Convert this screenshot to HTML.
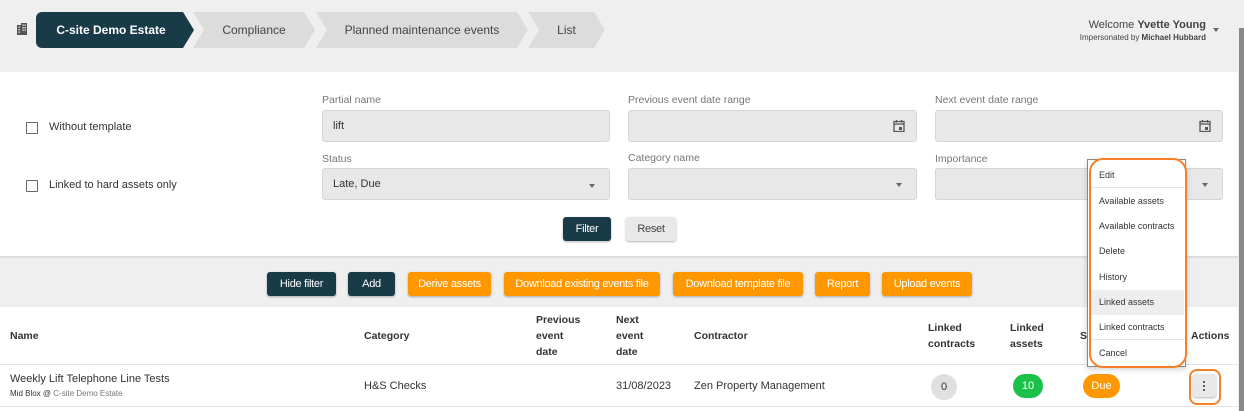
<!DOCTYPE html>
<html><head><meta charset="utf-8"><style>
*{box-sizing:border-box;margin:0;padding:0}
body{width:1244px;height:411px;overflow:hidden;background:#efefef;font-family:"Liberation Sans",sans-serif;color:#333;position:relative;font-size:11px}
.abs{position:absolute}
.crumb{position:absolute;top:12px;height:36px;display:flex;align-items:center;justify-content:center;font-size:12px;color:#444;background:#dcdcdc;clip-path:polygon(0 0,calc(100% - 11px) 0,100% 50%,calc(100% - 11px) 100%,0 100%,11px 50%)}
.panel{position:absolute;left:0;top:72px;width:1238px;height:186px;background:#fff;border-bottom:2px solid #ddd}
.lbl{position:absolute;font-size:10.5px;color:#777}
.inp{position:absolute;height:32px;background:#e8e8e8;border:1px solid #d6d6d6;border-radius:3px;font-size:11px;color:#333;padding-left:10px;line-height:30px}
.cb{position:absolute;width:12px;height:12px;border:1px solid #666;border-radius:1px}
.btn{position:absolute;height:24px;border-radius:3px;color:#fff;font-size:11px;display:flex;align-items:center;justify-content:center;box-shadow:0 1px 2px rgba(0,0,0,.3);letter-spacing:-.3px}
.dk{background:#193a47}.or{background:#ff9800}
.th{position:absolute;font-size:10.5px;font-weight:bold;color:#333;line-height:16px}
.td{position:absolute;font-size:11px;color:#333}
.caret{position:absolute;width:0;height:0;border-left:3.5px solid transparent;border-right:3.5px solid transparent;border-top:4px solid #666}
.mi{position:absolute;left:1099px;font-size:9px;color:#333}
</style></head><body>
<svg class="abs" style="left:16px;top:22px" width="12" height="13" viewBox="0 0 12 13"><path d="M1 13V3h4V1h6v12H1z" fill="#555"/><g fill="#efefef"><rect x="2.5" y="4.5" width="1.3" height="1.3"/><rect x="2.5" y="7" width="1.3" height="1.3"/><rect x="2.5" y="9.5" width="1.3" height="1.3"/><rect x="6.5" y="2.5" width="1.3" height="1.3"/><rect x="8.5" y="2.5" width="1.3" height="1.3"/><rect x="6.5" y="5" width="1.3" height="1.3"/><rect x="8.5" y="5" width="1.3" height="1.3"/><rect x="6.5" y="7.5" width="1.3" height="1.3"/><rect x="8.5" y="7.5" width="1.3" height="1.3"/></g></svg>
<div class="crumb" style="left:36px;width:158px;background:#193a47;color:#fff;font-weight:bold;border-radius:6px 0 0 6px;clip-path:polygon(0 0,calc(100% - 11px) 0,100% 50%,calc(100% - 11px) 100%,0 100%);padding-right:8px">C-site Demo Estate</div>
<div class="crumb" style="left:193px;width:122px">Compliance</div>
<div class="crumb" style="left:316px;width:212px">Planned maintenance events</div>
<div class="crumb" style="left:528px;width:77px">List</div>
<div class="abs" style="right:38px;top:19px;font-size:11px;color:#444;text-align:right;line-height:12px">Welcome <b>Yvette Young</b><br><span style="font-size:8px">Impersonated by <b>Michael Hubbard</b></span></div>
<div class="caret" style="left:1213px;top:28px"></div>

<div class="panel">
<div class="cb" style="left:26px;top:50px"></div><div class="td" style="left:49px;top:49px">Without template</div>
<div class="cb" style="left:26px;top:108px"></div><div class="td" style="left:49px;top:107px">Linked to hard assets only</div>
<div class="lbl" style="left:322px;top:22px">Partial name</div>
<div class="inp" style="left:322px;top:38px;width:288px">lift</div>
<div class="lbl" style="left:628px;top:22px">Previous event date range</div>
<div class="inp" style="left:628px;top:38px;width:289px"></div>
<svg class="abs" style="left:893px;top:47px" width="12" height="13" viewBox="0 0 12 13"><path d="M1 2.5h10v10H1zM1 5h10M3.5 1v2.5M8.5 1v2.5" fill="none" stroke="#555" stroke-width="1.3"/><rect x="6" y="8" width="3" height="3" fill="#555"/></svg>
<div class="lbl" style="left:935px;top:22px">Next event date range</div>
<div class="inp" style="left:935px;top:38px;width:288px"></div>
<svg class="abs" style="left:1199px;top:47px" width="12" height="13" viewBox="0 0 12 13"><path d="M1 2.5h10v10H1zM1 5h10M3.5 1v2.5M8.5 1v2.5" fill="none" stroke="#555" stroke-width="1.3"/><rect x="6" y="8" width="3" height="3" fill="#555"/></svg>
<div class="lbl" style="left:322px;top:81px">Status</div>
<div class="inp" style="left:322px;top:96px;width:288px">Late, Due</div>
<div class="caret" style="left:589px;top:112px"></div>
<div class="lbl" style="left:628px;top:80px">Category name</div>
<div class="inp" style="left:628px;top:96px;width:289px"></div>
<div class="caret" style="left:896px;top:111px"></div>
<div class="lbl" style="left:935px;top:81px">Importance</div>
<div class="inp" style="left:935px;top:96px;width:288px"></div>
<div class="caret" style="left:1202px;top:111px"></div>
<div class="btn dk" style="left:563px;top:145px;width:48px">Filter</div>
<div class="btn" style="left:626px;top:145px;width:50px;background:#e8e8e8;color:#444">Reset</div>
</div>

<div class="btn dk" style="left:267px;top:272px;width:69px">Hide filter</div>
<div class="btn dk" style="left:348px;top:272px;width:47px">Add</div>
<div class="btn or" style="left:408px;top:272px;width:83px">Derive assets</div>
<div class="btn or" style="left:504px;top:272px;width:156px">Download existing events file</div>
<div class="btn or" style="left:673px;top:272px;width:130px">Download template file</div>
<div class="btn or" style="left:815px;top:272px;width:55px">Report</div>
<div class="btn or" style="left:882px;top:272px;width:90px">Upload events</div>

<div class="abs" style="left:0;top:307px;width:1238px;height:104px;background:#fff"></div>
<div class="abs" style="left:0;top:364px;width:1238px;height:1px;background:#e3e3e3"></div>
<div class="abs" style="left:0;top:406px;width:1238px;height:1px;background:#e3e3e3"></div>
<div class="th" style="left:10px;top:328px">Name</div>
<div class="th" style="left:364px;top:328px">Category</div>
<div class="th" style="left:536px;top:312px">Previous<br>event<br>date</div>
<div class="th" style="left:616px;top:312px">Next<br>event<br>date</div>
<div class="th" style="left:694px;top:328px">Contractor</div>
<div class="th" style="left:928px;top:320px">Linked<br>contracts</div>
<div class="th" style="left:1010px;top:320px">Linked<br>assets</div>
<div class="th" style="left:1080px;top:328px">S</div>
<div class="th" style="left:1191px;top:328px">Actions</div>
<div class="td" style="left:10px;top:373px">Weekly Lift Telephone Line Tests</div>
<div class="td" style="left:10px;top:389px;font-size:8px;color:#333">Mid Blox @ <span style="color:#777">C-site Demo Estate</span></div>
<div class="td" style="left:364px;top:380px">H&amp;S Checks</div>
<div class="td" style="left:616px;top:380px">31/08/2023</div>
<div class="td" style="left:694px;top:380px">Zen Property Management</div>
<div class="abs" style="left:931px;top:374px;width:26px;height:26px;border-radius:13px;background:#e0e0e0;font-size:11px;display:flex;align-items:center;justify-content:center">0</div>
<div class="abs" style="left:1013px;top:374px;width:30px;height:24px;border-radius:12px;background:#1bc24a;color:#fff;font-size:11px;display:flex;align-items:center;justify-content:center">10</div>
<div class="abs" style="left:1083px;top:374px;width:37px;height:24px;border-radius:12px;background:#ff9800;color:#fff;font-size:11px;display:flex;align-items:center;justify-content:center">Due</div>
<div class="abs" style="left:1193px;top:374px;width:23px;height:23px;background:#e8e8e8;border-radius:3px;box-shadow:0 1px 2px rgba(0,0,0,.3)"></div>
<div class="abs" style="left:1203px;top:380px;width:2px;height:11px;background:radial-gradient(circle,#444 1px,transparent 1.1px) 0 0/2px 4px"></div>
<div class="abs" style="left:1189px;top:369px;width:32px;height:36px;border:2.5px solid #f58025;border-radius:8px"></div>

<div class="abs" style="left:1087px;top:159px;width:99px;height:208px;background:#fff;border:1px solid #888;box-shadow:0 2px 6px rgba(0,0,0,.2)"></div>
<div class="abs" style="left:1090px;top:290px;width:94px;height:25px;background:#eee"></div>
<div class="abs" style="left:1090px;top:187px;width:94px;height:1px;background:#e3e3e3"></div>
<div class="abs" style="left:1090px;top:339px;width:94px;height:1px;background:#e3e3e3"></div>
<div class="mi" style="top:170px">Edit</div>
<div class="mi" style="top:196px">Available assets</div>
<div class="mi" style="top:221px">Available contracts</div>
<div class="mi" style="top:246px">Delete</div>
<div class="mi" style="top:272px">History</div>
<div class="mi" style="top:297px">Linked assets</div>
<div class="mi" style="top:322px">Linked contracts</div>
<div class="mi" style="top:348px">Cancel</div>
<div class="abs" style="left:1089px;top:158px;width:98px;height:210px;border:2.5px solid #f58025;border-radius:14px"></div>
<div class="abs" style="left:1239px;top:28px;width:5px;height:383px;background:#888"></div>
</body></html>
